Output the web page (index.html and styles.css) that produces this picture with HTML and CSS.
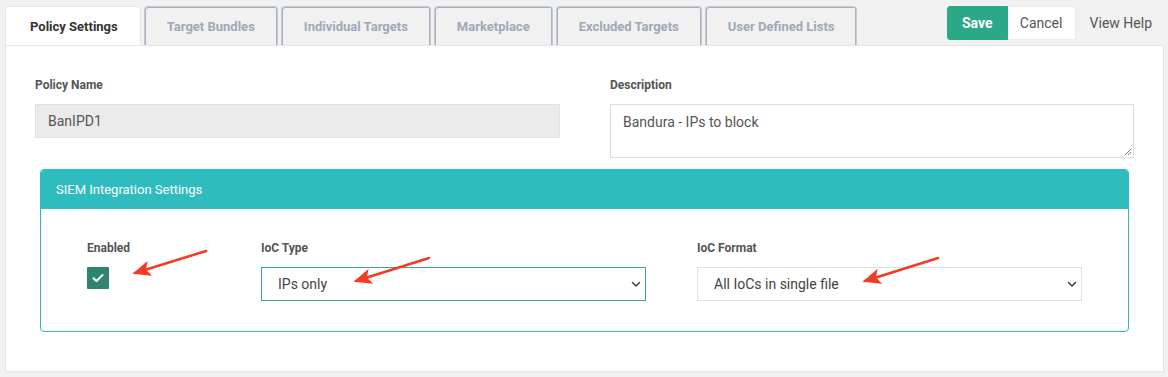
FILE: index.html
```html
<!DOCTYPE html>
<html>
<head>
<meta charset="utf-8">
<link rel="stylesheet" href="styles.css">
</head>
<body>
<div class="page">
  <div class="topbar">
    <div class="tabs">
      <div class="tab active">Policy Settings</div>
      <div class="tab">Target Bundles</div>
      <div class="tab">Individual Targets</div>
      <div class="tab">Marketplace</div>
      <div class="tab">Excluded Targets</div>
      <div class="tab">User Defined Lists</div>
    </div>
    <div class="actions">
      <div class="btn-group">
        <button class="btn btn-save">Save</button>
        <button class="btn btn-cancel">Cancel</button>
      </div>
      <span class="help">View Help</span>
    </div>
  </div>
  <div class="panel">
    <div class="form-row">
      <div class="field">
        <label class="label">Policy Name</label>
        <div class="input readonly">BanIPD1</div>
      </div>
      <div class="field">
        <label class="label">Description</label>
        <div class="textarea">Bandura - IPs to block
          <svg class="grip" width="8" height="8" viewBox="0 0 8 8"><path d="M7 1 L1 7 M7 4 L4 7" stroke="#777" stroke-width="1" fill="none"/></svg>
        </div>
      </div>
    </div>
    <div class="siem">
      <div class="siem-head">SIEM Integration Settings</div>
      <div class="siem-body">
        <div class="sfield">
          <label class="label">Enabled</label>
          <div class="checkbox">
            <svg width="12" height="10" viewBox="0 0 12 10"><path d="M1.5 5.2 L4.5 8 L10.5 2" stroke="#fff" stroke-width="2" fill="none" stroke-linecap="round" stroke-linejoin="round"/></svg>
          </div>
        </div>
        <div class="sfield">
          <label class="label">IoC Type</label>
          <div class="select focus"><span>IPs only</span>
            <svg class="chev" width="10" height="7" viewBox="0 0 10 7"><path d="M1.5 1.5 L5 5 L8.5 1.5" stroke="#444" stroke-width="1.6" fill="none" stroke-linecap="round" stroke-linejoin="round"/></svg>
          </div>
        </div>
        <div class="sfield">
          <label class="label">IoC Format</label>
          <div class="select"><span>All IoCs in single file</span>
            <svg class="chev" width="10" height="7" viewBox="0 0 10 7"><path d="M1.5 1.5 L5 5 L8.5 1.5" stroke="#444" stroke-width="1.6" fill="none" stroke-linecap="round" stroke-linejoin="round"/></svg>
          </div>
        </div>
      </div>
    </div>
  </div>
  <svg class="arrows" width="1168" height="377" viewBox="0 0 1168 377">
    <defs>
      <marker id="ah" markerWidth="8" markerHeight="6" refX="6" refY="3" orient="auto" markerUnits="strokeWidth">
        <path d="M0 0 L7 3 L0 6 L1.6 3 Z" fill="#f03c24"/>
      </marker>
    </defs>
    <line x1="206" y1="251" x2="135" y2="273" stroke="#f03c24" stroke-width="2.6" stroke-linecap="round" marker-end="url(#ah)"/>
    <line x1="429" y1="258" x2="356" y2="281" stroke="#f03c24" stroke-width="2.6" stroke-linecap="round" marker-end="url(#ah)"/>
    <line x1="938" y1="258" x2="865" y2="281" stroke="#f03c24" stroke-width="2.6" stroke-linecap="round" marker-end="url(#ah)"/>
  </svg>
</div>
</body>
</html>
```
FILE: styles.css
```css
* { box-sizing: border-box; }
html, body { margin: 0; padding: 0; }
body {
  background: #f1f1f1;
  font-family: Roboto, "Liberation Sans", Arial, sans-serif;
  color: #555;
  width: 1168px;
  height: 377px;
  overflow: hidden;
}
.page { position: relative; width: 1168px; height: 377px; }
.topbar {
  display: flex;
  justify-content: space-between;
  align-items: flex-start;
  padding: 6px 16px 0 5px;
  height: 45px;
}
.tabs { display: flex; gap: 3px; align-items: flex-end; height: 39px; }
.tab {
  height: 39px;
  padding: 0 22px;
  display: flex;
  align-items: center;
  font-size: 13px;
  font-weight: 700;
  color: #9ea8b8;
  border: 1px solid #c3c9d3;
  border-bottom: none;
  border-radius: 4px 4px 0 0;
  box-shadow: inset 1px 1px 0 #a9b1be, inset -1px 0 0 #a9b1be;
  background: #f1f1f1;
}
.tab.active {
  color: #333;
  background: #fff;
  border-color: #e6e6e6;
  box-shadow: none;
  height: 39px;
  padding: 0 22px 0 24px;
}
.actions { display: flex; align-items: center; gap: 14px; }
.btn-group { display: flex; }
.btn {
  height: 34px;
  font-family: inherit;
  font-size: 14px;
  border: 1px solid transparent;
  padding: 0 15px;
  cursor: pointer;
}
.btn-save {
  background: #2aa888;
  color: #fff;
  font-weight: 700;
  border-radius: 3px 0 0 3px;
  border-color: #2aa888;
  padding: 0 14px;
}
.btn-cancel {
  background: #fff;
  color: #555;
  border-color: #eaeaea;
  border-left: none;
  border-radius: 0 3px 3px 0;
  width: 68px;
  padding: 0;
}
.help { font-size: 14px; color: #555; }
.panel {
  margin: 0 4px 0 5px;
  height: 327px;
  background: #fff;
  border: 1px solid #e3e3e3;
  border-top-color: #e6e6e6;
  padding: 32px 29px 0 29px;
}
.form-row {
  display: grid;
  grid-template-columns: 525px 524px;
  column-gap: 50px;
}
.label {
  display: block;
  font-size: 12px;
  font-weight: 700;
  color: #555;
  line-height: 14px;
  margin-bottom: 12px;
}
.input {
  height: 34px;
  border: 1px solid #e1e1e1;
  padding: 0 12px;
  display: flex;
  align-items: center;
  font-size: 14px;
  color: #555;
}
.input.readonly { background: #ebebeb; }
.textarea {
  position: relative;
  height: 54px;
  border: 1px solid #dedede;
  padding: 8px 12px;
  font-size: 14px;
  line-height: 18px;
  color: #555;
}
.grip { position: absolute; right: 1px; bottom: 1px; }
.siem {
  margin: 11px 0 0 5px;
  width: 1089px;
  border: 1px solid #2ebcbf;
  border-radius: 4px;
  overflow: hidden;
}
.siem-head {
  background: #2ebcbf;
  color: #fff;
  font-size: 13px;
  height: 39px;
  display: flex;
  align-items: center;
  padding-left: 15px;
}
.siem-body {
  display: grid;
  grid-template-columns: 174px 436px 385px;
  padding: 32px 0 30px 46px;
}
.checkbox {
  width: 22px;
  height: 22px;
  background: #2e8470;
  border-radius: 1px;
  display: flex;
  align-items: center;
  justify-content: center;
}
.select {
  position: relative;
  width: 385px;
  height: 34px;
  border: 1px solid #e1e1e1;
  display: flex;
  align-items: center;
  padding-left: 16px;
  font-size: 14px;
  color: #444;
}
.select.focus { border-color: #3aa98a; }
.chev { position: absolute; right: 4px; top: 13px; }
.arrows { position: absolute; left: 0; top: 0; pointer-events: none; }
```
